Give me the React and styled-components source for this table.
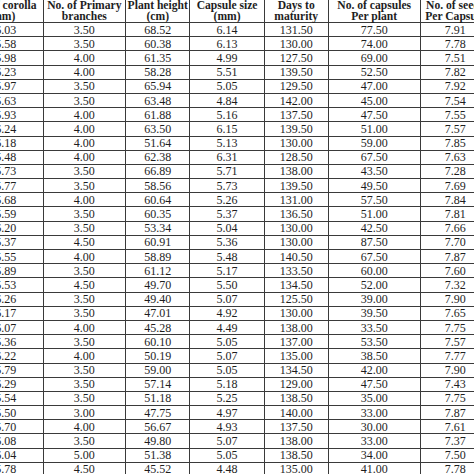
import styled, { createGlobalStyle } from "styled-components";

const GlobalStyle = createGlobalStyle`
  html, body {
    margin: 0;
    padding: 0;
    background: #ffffff;
    overflow: hidden;
  }
`;

const Viewport = styled.div`
  width: 474px;
  height: 474px;
  overflow: hidden;
  background: #ffffff;
`;

const Table = styled.table`
  border-collapse: collapse;
  table-layout: fixed;
  width: 529.7px;
  margin-left: -40px;
  margin-top: -1px;
  font-family: "Liberation Serif", "Times New Roman", serif;
  color: #1e1e1e;
`;

const HeadRow = styled.tr`
  height: 23px;
`;

const HeadCell = styled.th`
  border: 1px solid #3a3a3a;
  padding: 0;
  font-size: 11.6px;
  font-weight: 700;
  line-height: 11px;
  text-align: center;
  vertical-align: middle;
  white-space: nowrap;
`;

const Row = styled.tr`
  height: 14.19px;
`;

const Cell = styled.td`
  border: 1px solid #3a3a3a;
  padding: 0 0 0 ${(props) => props.shift || 0}px;
  font-size: 12px;
  line-height: 12px;
  text-align: center;
  vertical-align: middle;
  white-space: nowrap;
`;

const widths = [82.7, 82.3, 64.5, 74.2, 64, 92, 70];

const headers = [
  ["Size of corolla", "(mm)"],
  ["No. of Primary", "branches"],
  ["Plant height", "(cm)"],
  ["Capsule size", "(mm)"],
  ["Days to", "maturity"],
  ["No. of capsules", "Per plant"],
  ["No. of seeds", "Per Capsule"],
];

const corolla = [
  "6.03", "5.58", "5.98", "6.23", "5.97", "5.63", "5.93", "6.24", "6.18", "5.48",
  "5.73", "5.77", "5.68", "5.59", "6.20", "5.37", "5.55", "5.89", "5.53", "6.26",
  "6.17", "6.07", "5.36", "6.22", "5.79", "6.29", "5.54", "5.50", "5.70", "6.08",
  "6.04", "5.78",
];

const branches = [
  "3.50", "3.50", "4.00", "4.00", "3.50", "3.50", "4.00", "4.00", "4.00", "4.00",
  "3.50", "3.50", "4.00", "3.50", "3.50", "4.50", "4.00", "3.50", "4.50", "3.50",
  "3.50", "4.00", "3.50", "4.00", "3.50", "3.50", "3.50", "3.00", "4.00", "3.50",
  "5.00", "4.50",
];

const height = [
  "68.52", "60.38", "61.35", "58.28", "65.94", "63.48", "61.88", "63.50", "51.64", "62.38",
  "66.89", "58.56", "60.64", "60.35", "53.34", "60.91", "58.89", "61.12", "49.70", "49.40",
  "47.01", "45.28", "60.10", "50.19", "59.00", "57.14", "51.18", "47.75", "56.67", "49.80",
  "51.38", "45.52",
];

const capsuleSize = [
  "6.14", "6.13", "4.99", "5.51", "5.05", "4.84", "5.16", "6.15", "5.13", "6.31",
  "5.71", "5.73", "5.26", "5.37", "5.04", "5.36", "5.48", "5.17", "5.50", "5.07",
  "4.92", "4.49", "5.05", "5.07", "5.05", "5.18", "5.25", "4.97", "4.93", "5.07",
  "5.05", "4.48",
];

const maturity = [
  "131.50", "130.00", "127.50", "139.50", "129.50", "142.00", "137.50", "139.50", "130.00", "128.50",
  "138.00", "139.50", "131.00", "136.50", "130.00", "130.00", "140.50", "133.50", "134.50", "125.50",
  "130.00", "138.00", "137.00", "135.00", "134.50", "129.00", "138.50", "140.00", "137.50", "138.00",
  "138.50", "135.00",
];

const capsules = [
  "77.50", "74.00", "69.00", "52.50", "47.00", "45.00", "47.50", "51.00", "59.00", "67.50",
  "43.50", "49.50", "57.50", "51.00", "42.50", "87.50", "67.50", "60.00", "52.00", "39.00",
  "39.50", "33.50", "53.50", "38.50", "42.00", "47.50", "35.00", "33.00", "30.00", "33.00",
  "34.00", "41.00",
];

const seeds = [
  "7.91", "7.78", "7.51", "7.82", "7.92", "7.54", "7.55", "7.57", "7.85", "7.63",
  "7.28", "7.69", "7.84", "7.81", "7.66", "7.70", "7.87", "7.60", "7.32", "7.90",
  "7.65", "7.75", "7.57", "7.77", "7.90", "7.43", "7.75", "7.87", "7.61", "7.37",
  "7.50", "7.78",
];

const columns = [corolla, branches, height, capsuleSize, maturity, capsules, seeds];

function App() {
  return (
    <Viewport>
      <GlobalStyle />
      <Table>
        <colgroup>
          {widths.map((w, i) => (
            <col key={i} style={{ width: w }} />
          ))}
        </colgroup>
        <thead>
          <HeadRow>
            {headers.map(([top, bottom]) => (
              <HeadCell key={top}>
                {top}
                <br />
                {bottom}
              </HeadCell>
            ))}
          </HeadRow>
        </thead>
        <tbody>
          {corolla.map((_, r) => (
            <Row key={r}>
              {columns.map((col, c) => (
                <Cell key={c} shift={c === 0 ? 8 : 0}>
                  {col[r]}
                </Cell>
              ))}
            </Row>
          ))}
        </tbody>
      </Table>
    </Viewport>
  );
}

export default App;
